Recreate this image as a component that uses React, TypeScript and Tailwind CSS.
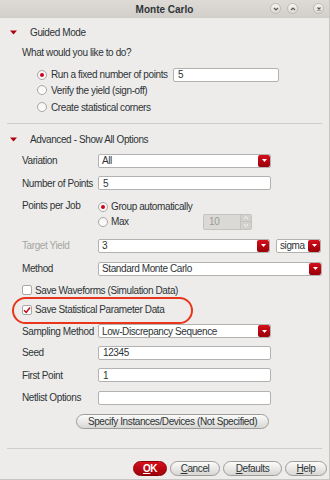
import React from "react";

const font = { fontFamily: '"Liberation Sans", Arial, sans-serif' };

function Tri() {
  return (
    <svg width="7" height="5" viewBox="0 0 7 5" className="shrink-0">
      <path d="M0 0.5 L7 0.5 L3.5 4.5 Z" fill="#b00010" />
    </svg>
  );
}

function Radio({ on }: { on?: boolean }) {
  return (
    <span className="relative inline-flex h-[10px] w-[10px] shrink-0 items-center justify-center rounded-full border border-[#a8a8a6] bg-gradient-to-b from-[#f4f4f3] to-[#ffffff]">
      {on && <span className="h-[4px] w-[4px] rounded-full bg-[#d0001a]" />}
    </span>
  );
}

function Check({ on }: { on?: boolean }) {
  return (
    <span className="relative inline-flex h-[10px] w-[10px] shrink-0 items-center justify-center rounded-[2px] border border-[#a8a8a6] bg-white">
      {on && (
        <svg width="8" height="8" viewBox="0 0 8 8">
          <path d="M1 4.2 L3.2 6.4 L7 1.4" stroke="#c0101e" strokeWidth="1.6" fill="none" />
        </svg>
      )}
    </span>
  );
}

function Input({ value, w }: { value: string; w: string }) {
  return (
    <div className={`flex h-[14px] items-center rounded-[2px] border border-[#b2b2b0] bg-white pl-[4px] text-[#2e3436] ${w}`}>
      {value}
    </div>
  );
}

function Select({ value, w }: { value: string; w: string }) {
  return (
    <div className={`flex h-[14px] items-stretch overflow-hidden rounded-[2px] border border-[#b2b2b0] bg-white text-[#2e3436] ${w}`}>
      <div className="flex flex-1 items-center pl-[3px]">{value}</div>
      <div className="flex w-[12px] items-center justify-center rounded-[2px] bg-gradient-to-b from-[#d4101c] to-[#9a0008]">
        <svg width="5" height="3" viewBox="0 0 5 3">
          <path d="M0 0 L5 0 L2.5 3 Z" fill="#ffffff" />
        </svg>
      </div>
    </div>
  );
}

function Row({ label, h, mt, gray, children }: { label: string; h: string; mt: string; gray?: boolean; children?: React.ReactNode }) {
  return (
    <div className={`flex items-center ${h} ${mt}`}>
      <div className={`w-[98px] shrink-0 pl-[22px] whitespace-nowrap ${gray ? "text-[#a4a4a2]" : ""}`}>{label}</div>
      {children}
    </div>
  );
}

function TitleBtn({ kind }: { kind: "down" | "up" | "x" }) {
  return (
    <span className="flex h-[11px] w-[11px] items-center justify-center rounded-full border border-[#bdbab5] bg-gradient-to-b from-[#f6f5f3] to-[#dcd9d5]">
      <svg width="6" height="6" viewBox="0 0 6 6">
        {kind === "down" && <path d="M1 2 L3 4 L5 2" stroke="#555" strokeWidth="1.2" fill="none" />}
        {kind === "up" && <path d="M1 4 L3 2 L5 4" stroke="#555" strokeWidth="1.2" fill="none" />}
        {kind === "x" && <path d="M1.5 1.5 L4.5 4.5 M4.5 1.5 L1.5 4.5" stroke="#555" strokeWidth="1.2" fill="none" />}
      </svg>
    </span>
  );
}

function Btn({ u, rest, w, primary }: { u: string; rest: string; w: string; primary?: boolean }) {
  return (
    <div
      className={`flex h-[15px] items-center justify-center rounded-full border ${w} ${
        primary
          ? "border-[#8a0008] bg-gradient-to-b from-[#d8101e] to-[#a00008] font-bold text-white"
          : "border-[#9c9c9a] bg-gradient-to-b from-[#fbfbfa] to-[#d8d7d4] text-[#2e3436]"
      }`}
    >
      <span className="underline underline-offset-[1px]">{u}</span>
      {rest}
    </div>
  );
}

export default function App() {
  return (
    <div style={font} className="flex h-[480px] w-[330px] flex-col overflow-hidden border-r border-b border-[#c8c6c2] bg-[#edeceb] text-[10px] tracking-[-0.4px] text-[#2e3436]">
      <div className="relative flex h-[18px] shrink-0 items-center justify-center bg-gradient-to-b from-[#dedbd7] to-[#d2cfcb]">
        <span className="text-[10px] font-bold tracking-normal text-[#2e3436]">Monte Carlo</span>
        <div className="absolute right-[5px] top-[3px] flex items-center">
          <TitleBtn kind="down" />
          <span className="w-[6px]" />
          <TitleBtn kind="up" />
          <span className="w-[15px]" />
          <TitleBtn kind="x" />
        </div>
      </div>

      <div className="mt-[7px] flex h-[14px] items-center pl-[10px]">
        <Tri />
        <span className="ml-[13px]">Guided Mode</span>
      </div>
      <div className="mt-[6px] flex h-[14px] items-center pl-[22px]">What would you like to do?</div>

      <div className="mt-[8px] flex h-[15px] items-center pl-[37px]">
        <Radio on />
        <span className="ml-[4px] w-[122px]">Run a fixed number of points</span>
        <Input value="5" w="w-[106px]" />
      </div>
      <div className="flex h-[16px] items-center pl-[37px]">
        <Radio />
        <span className="ml-[4px]">Verify the yield (sign-off)</span>
      </div>
      <div className="flex h-[18px] items-center pl-[37px]">
        <Radio />
        <span className="ml-[4px]">Create statistical corners</span>
      </div>

      <div className="mx-[7px] mt-[7px] h-px bg-[#cfcecb]" />

      <div className="mt-[8px] flex h-[14px] items-center pl-[10px]">
        <Tri />
        <span className="ml-[13px]">Advanced - Show All Options</span>
      </div>

      <Row label="Variation" h="h-[15px]" mt="mt-[7px]">
        <Select value="All" w="w-[173px]" />
      </Row>
      <Row label="Number of Points" h="h-[16px]" mt="mt-[7px]">
        <Input value="5" w="w-[173px]" />
      </Row>

      <div className="mt-[6px] flex">
        <div className="h-[16px] w-[98px] shrink-0 pl-[22px] pt-[1px]">Points per Job</div>
        <div className="flex flex-col">
          <div className="flex h-[16px] items-center pt-[3px]">
            <Radio on />
            <span className="ml-[3px]">Group automatically</span>
          </div>
          <div className="flex h-[17px] items-center">
            <Radio />
            <span className="ml-[3px] w-[92px]">Max</span>
            <div className="flex h-[16px] w-[49px] items-stretch overflow-hidden rounded-[2px] border border-[#c4c3c0] bg-[#dad9d6] text-[#9a9a98]">
              <div className="flex flex-1 items-center pl-[5px]">10</div>
              <div className="flex w-[11px] flex-col border-l border-[#c4c3c0] bg-[#d2d1ce]">
                <div className="flex flex-1 items-center justify-center border-b border-[#c4c3c0]">
                  <svg width="4" height="3" viewBox="0 0 4 3"><path d="M0 3 L2 0.5 L4 3" stroke="#f4f4f2" fill="none" /></svg>
                </div>
                <div className="flex flex-1 items-center justify-center">
                  <svg width="4" height="3" viewBox="0 0 4 3"><path d="M0 0 L2 2.5 L4 0" stroke="#f4f4f2" fill="none" /></svg>
                </div>
              </div>
            </div>
          </div>
        </div>
      </div>

      <Row label="Target Yield" h="h-[15px]" mt="mt-[8px]" gray>
        <Select value="3" w="w-[172px]" />
        <span className="w-[6px]" />
        <Select value="sigma" w="w-[45px]" />
      </Row>
      <Row label="Method" h="h-[15px]" mt="mt-[8px]">
        <Select value="Standard Monte Carlo" w="w-[224px]" />
      </Row>

      <div className="mt-[7px] flex h-[14px] items-center pl-[22px]">
        <Check />
        <span className="ml-[3px]">Save Waveforms (Simulation Data)</span>
      </div>
      <div className="ml-[12px] flex h-[27px] w-[181px] items-center rounded-full border-[2.5px] border-[#e8351c] pb-[2px] pl-[8px]">
        <Check on />
        <span className="ml-[3px]">Save Statistical Parameter Data</span>
      </div>

      <Row label="Sampling Method" h="h-[14px]" mt="mt-0">
        <Select value="Low-Discrepancy Sequence" w="w-[173px]" />
      </Row>
      <Row label="Seed" h="h-[15px]" mt="mt-[7px]">
        <Input value="12345" w="w-[173px]" />
      </Row>
      <Row label="First Point" h="h-[16px]" mt="mt-[7px]">
        <Input value="1" w="w-[173px]" />
      </Row>
      <Row label="Netlist Options" h="h-[15px]" mt="mt-[7px]">
        <Input value="" w="w-[173px]" />
      </Row>

      <div className="mt-[9px] flex justify-start pl-[76px]">
        <div className="flex h-[15px] w-[193px] items-center justify-center rounded-full border border-[#9c9c9a] bg-gradient-to-b from-[#fbfbfa] to-[#d8d7d4]">
          Specify Instances/Devices (Not Specified)
        </div>
      </div>

      <div className="mx-[7px] mt-[19px] h-px bg-[#cfcecb]" />

      <div className="mt-[12px] flex justify-end gap-[3px] pr-[2px]">
        <Btn u="O" rest="K" w="w-[34px]" primary />
        <Btn u="C" rest="ancel" w="w-[50px]" />
        <Btn u="D" rest="efaults" w="w-[59px]" />
        <Btn u="H" rest="elp" w="w-[42px]" />
      </div>
    </div>
  );
}
